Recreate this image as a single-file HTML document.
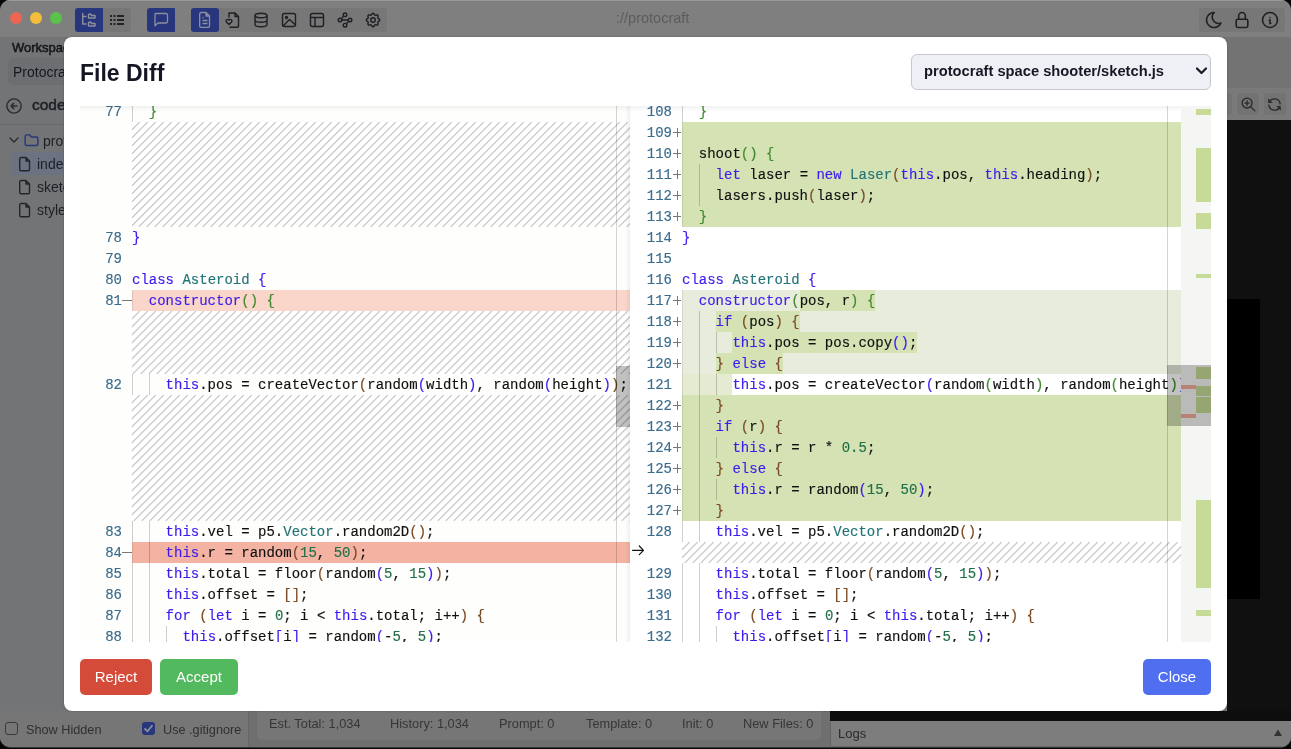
<!DOCTYPE html>
<html><head><meta charset="utf-8">
<style>
*{box-sizing:border-box}
html,body{margin:0;padding:0}
body{width:1291px;height:749px;overflow:hidden;background:#050505;font-family:"Liberation Sans",sans-serif;position:relative}
.abs{position:absolute}
#win{position:absolute;left:0;top:0;width:1291px;height:747px;border-radius:10px;overflow:hidden;background:#737476}
#title{left:0;top:0;width:1291px;height:37px;background:#7f7f7f;border-top:1px solid #9a9a9a}
.tl{position:absolute;width:12px;height:12px;border-radius:50%;top:12px}
.grp{position:absolute;top:8px;height:24px;background:#777777;border-radius:3px}
.btn{position:absolute;top:8px;height:24px;width:28px;border-radius:3px}
.blue{background:#27367d}
.ico{position:absolute;top:8px;width:28px;height:24px}
.ico svg{position:absolute;left:6px;top:4px;width:16px;height:16px}
#modal{left:64px;top:37px;width:1163px;height:674px;background:#fff;border-radius:8px;box-shadow:0 0 2px rgba(0,0,0,.3)}
.pane{position:absolute;top:106px;height:536px;overflow:hidden;will-change:transform}
.lines{position:absolute;left:0;top:-5px;width:100%}
.row{position:absolute;left:52px;right:0;height:21px}
.row.dl{background:#f9d5ca}
.row.ds{background:#f4b3a2}
.row.ad{background:#d5e2b4}
.row.al{background:#e8ecdc}
.seg{position:absolute;top:0;height:21px}
.guide{position:absolute;top:0;width:1px;height:21px;background:rgba(0,0,0,.19)}
.code{position:absolute;left:0;top:0;white-space:pre;font-family:"Liberation Mono",monospace;font-size:14px;line-height:21px;color:#111;padding-top:1px}
.code i{font-style:normal}
.code,.num{-webkit-text-stroke:0.15px currentColor}
.num{position:absolute;left:0;width:42px;text-align:right;height:21px;font-family:"Liberation Mono",monospace;font-size:14px;line-height:21px;color:#3a6c8c;padding-top:1px}
.mk{position:absolute;left:42px;width:10px;height:21px}
.mkp::before{content:"";position:absolute;left:1px;top:10px;width:8px;height:1px;background:#777}
.mkp::after{content:"";position:absolute;left:4.5px;top:6px;width:1px;height:9px;background:#777}
.mkm::before{content:"";position:absolute;left:0;top:10px;width:10px;height:1px;background:#777}
.hatch{position:absolute;left:52px;display:block}
</style></head><body><div id="root" style="position:absolute;left:0;top:0;width:1291px;height:749px;will-change:transform">
<svg width="0" height="0" style="position:absolute"><defs><pattern id="hp" width="8" height="8" patternUnits="userSpaceOnUse"><path d="M-2,2 L2,-2 M0,8 L8,0 M6,10 L10,6" stroke="#cbcbcb" stroke-width="1.1"/></pattern></defs></svg>
<div id="win">
  <div id="title" class="abs"></div>
  <!-- right area -->
  <div class="abs" style="left:1227px;top:37px;width:64px;height:51px;background:#737373"></div>
  <div class="abs" style="left:1227px;top:88px;width:64px;height:32px;background:#7a7a7a"></div>
  <div class="abs" style="left:1210px;top:93px;width:22px;height:22px;border-radius:4px;background:#737373"></div>
  <div class="abs" style="left:1237px;top:93px;width:22px;height:22px;border-radius:4px;background:#737373"></div>
  <div class="abs" style="left:1264px;top:93px;width:22px;height:22px;border-radius:4px;background:#737373"></div>
  <div class="abs" style="left:1227px;top:120px;width:64px;height:591px;background:#101010"></div>
  <div class="abs" style="left:1227px;top:299px;width:33px;height:300px;background:#000"></div>

  <div class="abs" style="left:11px;top:152px;width:237px;height:23px;background:#6c7281"></div>
  <div class="tl" style="left:10px;background:#ec6553"></div>
  <div class="tl" style="left:30px;background:#f3be3b"></div>
  <div class="tl" style="left:50px;background:#5ac24b"></div>
  <div class="grp" style="left:75px;width:56px"></div>
  <div class="btn blue" style="left:75px;border-radius:3px 0 0 3px"></div>
  <div class="btn blue" style="left:147px;border-radius:3px 0 0 3px"></div>
  <div class="grp" style="left:191px;width:196px"></div>
  <div class="btn blue" style="left:191px"></div>
  <div class="abs" style="left:616px;top:10px;font-size:14.5px;color:#5c5c5c">://protocraft</div>
  <div class="grp" style="left:1199px;width:86px"></div>


  <svg class="abs" style="left:79px;top:11px" width="20" height="18" viewBox="0 0 20 18" fill="none" stroke="#8d909c" stroke-width="1.4" stroke-linejoin="round" stroke-linecap="round">
    <path d="M3.7 2.5v10.5h3.3M3.7 5.5h3.3"/>
    <path d="M9.5 3.5v3.5h6.5v-2.5h-3.5l-1-1.5z"/>
    <path d="M9.5 11.5v3.5h6.5v-2.5h-3.5l-1-1.5z"/>
  </svg>
  <svg class="abs" style="left:107px;top:11px" width="20" height="18" viewBox="0 0 20 18" fill="#222327">
    <rect x="3" y="4" width="2" height="2"/><rect x="6.5" y="4" width="2" height="2"/><rect x="10" y="4" width="7" height="2"/>
    <rect x="3" y="8" width="2" height="2"/><rect x="6.5" y="8" width="2" height="2"/><rect x="10" y="8" width="7" height="2"/>
    <rect x="3" y="12" width="2" height="2"/><rect x="6.5" y="12" width="2" height="2"/><rect x="10" y="12" width="7" height="2"/>
  </svg>
  <svg class="abs" style="left:152px;top:11px" width="18" height="18" viewBox="0 0 18 18" fill="none" stroke="#8d909c" stroke-width="1.3" stroke-linejoin="round">
    <path d="M3.5 2.5h10.5a1.5 1.5 0 0 1 1.5 1.5v6.5a1.5 1.5 0 0 1 -1.5 1.5h-8l-3 2.8v-11a1.3 1.3 0 0 1 0.5 -1.3z"/>
  </svg>
  <svg class="abs" style="left:196px;top:11px" width="18" height="18" viewBox="0 0 18 18" fill="none" stroke="#8d909c" stroke-width="1.3" stroke-linejoin="round">
    <path d="M10 1.5v3.5h3.5M5 1.5h5l3.5 3.5v10a1.3 1.3 0 0 1 -1.3 1.3h-7.2a1.3 1.3 0 0 1 -1.3 -1.3v-12.2a1.3 1.3 0 0 1 1.3 -1.3z"/>
    <path d="M6.5 6.5h1M6.5 9.5h5M6.5 12.5h5"/>
  </svg>
  <g></g>
  <svg class="abs" style="left:224px;top:11px" width="18" height="18" viewBox="0 0 18 18" fill="none" stroke="#1f2024" stroke-width="1.4" stroke-linejoin="round" stroke-linecap="round">
    <path d="M5 2h6l3.5 3.5v9.5a1.3 1.3 0 0 1 -1.3 1.3h-7.2M5 2v4M11 2v3.5h3.5"/>
    <path d="M5 13.5l-2.6-2.5a1.5 1.5 0 0 1 2.6-2a1.5 1.5 0 0 1 2.6 2z"/>
  </svg>
  <svg class="abs" style="left:252px;top:11px" width="18" height="18" viewBox="0 0 18 18" fill="none" stroke="#1f2024" stroke-width="1.4">
    <ellipse cx="9" cy="4.5" rx="6" ry="2.3"/>
    <path d="M3 4.5v9a6 2.3 0 0 0 12 0v-9M3 9a6 2.3 0 0 0 12 0"/>
  </svg>
  <svg class="abs" style="left:280px;top:11px" width="18" height="18" viewBox="0 0 18 18" fill="none" stroke="#1f2024" stroke-width="1.4" stroke-linejoin="round">
    <rect x="2.5" y="2.5" width="13" height="13" rx="2"/>
    <circle cx="6.5" cy="6.5" r="1"/>
    <path d="M3 15l6.5-6.5l6 5.5"/>
  </svg>
  <svg class="abs" style="left:308px;top:11px" width="18" height="18" viewBox="0 0 18 18" fill="none" stroke="#1f2024" stroke-width="1.4">
    <rect x="2.5" y="2.5" width="13" height="13" rx="2"/>
    <path d="M2.5 6.5h13M7 6.5v9"/>
  </svg>
  <svg class="abs" style="left:336px;top:11px" width="18" height="18" viewBox="0 0 18 18" fill="none" stroke="#1f2024" stroke-width="1.4">
    <circle cx="4" cy="9" r="1.8"/><circle cx="9" cy="3.8" r="1.8"/><circle cx="14" cy="9" r="1.8"/><circle cx="9" cy="14.2" r="1.8"/>
    <path d="M5.8 9h6.4M5.3 7.7l2.4-2.6M12.7 10.3l-2.4 2.6"/>
  </svg>
  <svg class="abs" style="left:364px;top:11px" width="18" height="18" viewBox="0 0 24 24" fill="none" stroke="#1f2024" stroke-width="1.9" stroke-linejoin="round">
    <path d="M10.325 4.317c.426 -1.756 2.924 -1.756 3.35 0a1.724 1.724 0 0 0 2.573 1.066c1.543 -.94 3.31 .826 2.37 2.37a1.724 1.724 0 0 0 1.065 2.572c1.756 .426 1.756 2.924 0 3.35a1.724 1.724 0 0 0 -1.066 2.573c.94 1.543 -.826 3.31 -2.37 2.37a1.724 1.724 0 0 0 -2.572 1.065c-.426 1.756 -2.924 1.756 -3.35 0a1.724 1.724 0 0 0 -2.573 -1.066c-1.543 .94 -3.31 -.826 -2.37 -2.37a1.724 1.724 0 0 0 -1.065 -2.572c-1.756 -.426 -1.756 -2.924 0 -3.35a1.724 1.724 0 0 0 1.066 -2.573c-.94 -1.543 .826 -3.31 2.37 -2.37c1 .608 2.296 .07 2.572 -1.065z"/>
    <circle cx="12" cy="12" r="3"/>
  </svg>
  <svg class="abs" style="left:1204px;top:10px" width="20" height="20" viewBox="0 0 24 24" fill="none" stroke="#1f2024" stroke-width="1.9" stroke-linejoin="round">
    <path d="M12 3c.132 0 .263 0 .393 0a7.5 7.5 0 0 0 7.92 12.446a9 9 0 1 1 -8.313 -12.454z"/>
  </svg>
  <svg class="abs" style="left:1232px;top:10px" width="20" height="20" viewBox="0 0 24 24" fill="none" stroke="#1f2024" stroke-width="1.9" stroke-linejoin="round">
    <rect x="5" y="11" width="14" height="10" rx="2"/><path d="M8 11v-4a4 4 0 0 1 8 0v4"/>
  </svg>
  <svg class="abs" style="left:1260px;top:10px" width="20" height="20" viewBox="0 0 24 24" fill="none" stroke="#1f2024" stroke-width="1.9" stroke-linecap="round">
    <circle cx="12" cy="12" r="9"/><path d="M12 9h.01M11 12h1v4h1"/>
  </svg>
  <!-- sidebar icons -->
  <svg class="abs" style="left:5px;top:97px" width="18" height="18" viewBox="0 0 24 24" fill="none" stroke="#2a2c32" stroke-width="1.9" stroke-linecap="round" stroke-linejoin="round">
    <circle cx="12" cy="12" r="9.5"/><path d="M8 12h8M8 12l3.5 3.5M8 12l3.5-3.5"/>
  </svg>
  <svg class="abs" style="left:7px;top:133px" width="14" height="14" viewBox="0 0 14 14" fill="none" stroke="#2a2c32" stroke-width="1.4" stroke-linecap="round" stroke-linejoin="round">
    <path d="M3 5l4 4l4-4"/>
  </svg>
  <svg class="abs" style="left:23px;top:132px" width="17" height="17" viewBox="0 0 24 24" fill="none" stroke="#27367d" stroke-width="2" stroke-linejoin="round">
    <path d="M5 4h4l3 3h7a2 2 0 0 1 2 2v8a2 2 0 0 1 -2 2h-14a2 2 0 0 1 -2 -2v-11a2 2 0 0 1 2 -2"/>
  </svg>
  <svg class="abs" style="left:17px;top:155px" width="16" height="18" viewBox="0 0 16 18" fill="none" stroke="#23252b" stroke-width="1.4" stroke-linejoin="round">
    <path d="M9 2.5v3.5h3.5M4 2.5h5l3.5 3.5v8.5a1.3 1.3 0 0 1 -1.3 1.3h-7.2a1.3 1.3 0 0 1 -1.3 -1.3v-10.7a1.3 1.3 0 0 1 1.3 -1.3z"/>
  </svg>
  <svg class="abs" style="left:17px;top:178px" width="16" height="18" viewBox="0 0 16 18" fill="none" stroke="#23252b" stroke-width="1.4" stroke-linejoin="round">
    <path d="M9 2.5v3.5h3.5M4 2.5h5l3.5 3.5v8.5a1.3 1.3 0 0 1 -1.3 1.3h-7.2a1.3 1.3 0 0 1 -1.3 -1.3v-10.7a1.3 1.3 0 0 1 1.3 -1.3z"/>
  </svg>
  <svg class="abs" style="left:17px;top:201px" width="16" height="18" viewBox="0 0 16 18" fill="none" stroke="#23252b" stroke-width="1.4" stroke-linejoin="round">
    <path d="M9 2.5v3.5h3.5M4 2.5h5l3.5 3.5v8.5a1.3 1.3 0 0 1 -1.3 1.3h-7.2a1.3 1.3 0 0 1 -1.3 -1.3v-10.7a1.3 1.3 0 0 1 1.3 -1.3z"/>
  </svg>
  <svg class="abs" style="left:1240px;top:96px" width="17" height="17" viewBox="0 0 24 24" fill="none" stroke="#2a2b30" stroke-width="1.9" stroke-linecap="round">
    <circle cx="10" cy="10" r="7"/><path d="M7 10h6M10 7v6M21 21l-6-6"/>
  </svg>
  <svg class="abs" style="left:1266px;top:96px" width="17" height="17" viewBox="0 0 24 24" fill="none" stroke="#2a2b30" stroke-width="1.9" stroke-linecap="round" stroke-linejoin="round">
    <path d="M20 11a8.1 8.1 0 0 0 -15.5 -2m-.5 -4v4h4M4 13a8.1 8.1 0 0 0 15.5 2m.5 4v-4h-4"/>
  </svg>

  <!-- sidebar -->
  <div class="abs" style="left:12px;top:40px;font-size:13px;color:#15171d;-webkit-text-stroke:0.55px #15171d">Workspace</div>
  <div class="abs" style="left:8px;top:58px;width:240px;height:27px;border-radius:5px;background:#6c6e71"></div>
  <div class="abs" style="left:13px;top:64px;font-size:14px;color:#15171d">Protocraft</div>
  <div class="abs" style="left:32px;top:96px;font-size:15.5px;color:#1d1f25;-webkit-text-stroke:0.45px #1d1f25">code</div>
  <div class="abs" style="left:0;top:124px;width:248px;height:1px;background:#67696b"></div>
  <div class="abs" style="left:43px;top:133px;font-size:14px;color:#1d1f25">protocraft</div>
  <div class="abs" style="left:37px;top:156px;font-size:14px;color:#1d1f25">index.html</div>
  <div class="abs" style="left:37px;top:179px;font-size:14px;color:#1d1f25">sketch.js</div>
  <div class="abs" style="left:37px;top:202px;font-size:14px;color:#1d1f25">style.css</div>

  <!-- bottom bar -->
  <div class="abs" style="left:0;top:711px;width:248px;height:36px;background:#767676"></div>
  <div class="abs" style="left:248px;top:711px;width:582px;height:36px;background:#6f6f6f;border-left:1px solid #686868"></div>
  <div class="abs" style="left:257px;top:711px;width:564px;height:29px;border-radius:0 0 5px 5px;background:#767676"></div>
  <div class="abs" style="left:830px;top:711px;width:461px;height:10px;background:#0d0d0d"></div>
  <div class="abs" style="left:830px;top:721px;width:461px;height:26px;background:#7d7d7d;border-left:1px solid #666;border-bottom:1px solid #6a6a6a"></div>
  <div class="abs" style="left:5px;top:722px;width:13px;height:13px;border:1px solid #3a3a3a;border-radius:3px"></div>
  <div class="abs" style="left:26px;top:722px;font-size:12.7px;color:#303030;margin-top:1px">Show Hidden</div>
  <div class="abs" style="left:142px;top:722px;width:13px;height:13px;border-radius:3px;background:#27367d"></div>
  <svg class="abs" style="left:142px;top:722px" width="13" height="13" viewBox="0 0 13 13" fill="none" stroke="#8d909c" stroke-width="1.8" stroke-linecap="round" stroke-linejoin="round"><path d="M3 6.8l2.5 2.5l4.5-5.5"/></svg>
  <div class="abs" style="left:163px;top:722px;font-size:12.7px;color:#303030;margin-top:1px">Use .gitignore</div>
  <div class="abs" style="left:269px;top:716px;font-size:12.8px;color:#363636">Est. Total: 1,034</div>
  <div class="abs" style="left:390px;top:716px;font-size:12.8px;color:#363636">History: 1,034</div>
  <div class="abs" style="left:499px;top:716px;font-size:12.8px;color:#363636">Prompt: 0</div>
  <div class="abs" style="left:586px;top:716px;font-size:12.8px;color:#363636">Template: 0</div>
  <div class="abs" style="left:682px;top:716px;font-size:12.8px;color:#363636">Init: 0</div>
  <div class="abs" style="left:743px;top:716px;font-size:12.8px;color:#363636">New Files: 0</div>
  <div class="abs" style="left:838px;top:726px;font-size:13px;color:#2a2a2a">Logs</div>
  <svg class="abs" style="left:1273px;top:728px" width="10" height="9" viewBox="0 0 10 9"><path d="M5 1.5L9 8H1z" fill="#333"/></svg>
</div>

<div class="abs" style="left:0;top:0;width:1291px;height:748px;border-radius:10px;border-bottom:1px solid rgba(255,255,255,.2);pointer-events:none"></div>
<!-- modal -->
<div id="modal" class="abs"></div>
<div class="abs" style="left:80px;top:60px;font-size:23px;font-weight:bold;color:#141624">File Diff</div>
<div class="abs" style="left:911px;top:54px;width:300px;height:36px;border:1px solid #c6c8d0;border-radius:6px;background:#eff0f5"></div>
<div class="abs" style="left:924px;top:63px;font-size:14.7px;font-weight:bold;color:#161824">protocraft space shooter/sketch.js</div>
<svg class="abs" style="left:1195px;top:65px" width="13" height="12" viewBox="0 0 13 12" fill="none" stroke="#161824" stroke-width="2.2" stroke-linecap="round" stroke-linejoin="round"><path d="M2 3.5l4.5 4.5l4.5-4.5"/></svg>

<div class="pane" style="left:80px;width:550px;background:#fefefc">
  <div class="lines">
<div class="row" style="top:0px">
<div class="guide" style="left:0px"></div>
<div class="code">  <i style="color:#3f8a2c">}</i></div>
</div>
<div class="num" style="top:0px">77</div>
<svg class="hatch" style="top:21px;height:105px" width="498" height="105"><rect width="100%" height="100%" fill="#fff"/><path d="M-0.25,0L-105.25,105M7.75,0L-97.25,105M15.75,0L-89.25,105M23.75,0L-81.25,105M31.75,0L-73.25,105M39.75,0L-65.25,105M47.75,0L-57.25,105M55.75,0L-49.25,105M63.75,0L-41.25,105M71.75,0L-33.25,105M79.75,0L-25.25,105M87.75,0L-17.25,105M95.75,0L-9.25,105M103.75,0L-1.25,105M111.75,0L6.75,105M119.75,0L14.75,105M127.75,0L22.75,105M135.75,0L30.75,105M143.75,0L38.75,105M151.75,0L46.75,105M159.75,0L54.75,105M167.75,0L62.75,105M175.75,0L70.75,105M183.75,0L78.75,105M191.75,0L86.75,105M199.75,0L94.75,105M207.75,0L102.75,105M215.75,0L110.75,105M223.75,0L118.75,105M231.75,0L126.75,105M239.75,0L134.75,105M247.75,0L142.75,105M255.75,0L150.75,105M263.75,0L158.75,105M271.75,0L166.75,105M279.75,0L174.75,105M287.75,0L182.75,105M295.75,0L190.75,105M303.75,0L198.75,105M311.75,0L206.75,105M319.75,0L214.75,105M327.75,0L222.75,105M335.75,0L230.75,105M343.75,0L238.75,105M351.75,0L246.75,105M359.75,0L254.75,105M367.75,0L262.75,105M375.75,0L270.75,105M383.75,0L278.75,105M391.75,0L286.75,105M399.75,0L294.75,105M407.75,0L302.75,105M415.75,0L310.75,105M423.75,0L318.75,105M431.75,0L326.75,105M439.75,0L334.75,105M447.75,0L342.75,105M455.75,0L350.75,105M463.75,0L358.75,105M471.75,0L366.75,105M479.75,0L374.75,105M487.75,0L382.75,105M495.75,0L390.75,105M503.75,0L398.75,105M511.75,0L406.75,105M519.75,0L414.75,105M527.75,0L422.75,105M535.75,0L430.75,105M543.75,0L438.75,105M551.75,0L446.75,105M559.75,0L454.75,105M567.75,0L462.75,105M575.75,0L470.75,105M583.75,0L478.75,105M591.75,0L486.75,105M599.75,0L494.75,105M607.75,0L502.75,105M615.75,0L510.75,105" stroke="#cbcbcb" stroke-width="1.25" fill="none"/></svg>
<div class="row" style="top:126px">
<div class="code"><i style="color:#3a1cf0">}</i></div>
</div>
<div class="num" style="top:126px">78</div>
<div class="row" style="top:147px">
<div class="code"></div>
</div>
<div class="num" style="top:147px">79</div>
<div class="row" style="top:168px">
<div class="code"><i style="color:#3a1cf0">class</i> <i style="color:#227377">Asteroid</i> <i style="color:#3a1cf0">{</i></div>
</div>
<div class="num" style="top:168px">80</div>
<div class="row dl" style="top:189px">
<div class="guide" style="left:0;background:rgba(0,0,0,.09)"></div>
<div class="code">  <i style="color:#3a1cf0">constructor</i><i style="color:#3f8a2c">()</i> <i style="color:#3f8a2c">{</i></div>
</div>
<div class="num" style="top:189px">81</div>
<div class="mk mkm" style="top:189px"></div>
<svg class="hatch" style="top:210px;height:63px" width="498" height="63"><rect width="100%" height="100%" fill="#fff"/><path d="M-0.25,0L-63.25,63M7.75,0L-55.25,63M15.75,0L-47.25,63M23.75,0L-39.25,63M31.75,0L-31.25,63M39.75,0L-23.25,63M47.75,0L-15.25,63M55.75,0L-7.25,63M63.75,0L0.75,63M71.75,0L8.75,63M79.75,0L16.75,63M87.75,0L24.75,63M95.75,0L32.75,63M103.75,0L40.75,63M111.75,0L48.75,63M119.75,0L56.75,63M127.75,0L64.75,63M135.75,0L72.75,63M143.75,0L80.75,63M151.75,0L88.75,63M159.75,0L96.75,63M167.75,0L104.75,63M175.75,0L112.75,63M183.75,0L120.75,63M191.75,0L128.75,63M199.75,0L136.75,63M207.75,0L144.75,63M215.75,0L152.75,63M223.75,0L160.75,63M231.75,0L168.75,63M239.75,0L176.75,63M247.75,0L184.75,63M255.75,0L192.75,63M263.75,0L200.75,63M271.75,0L208.75,63M279.75,0L216.75,63M287.75,0L224.75,63M295.75,0L232.75,63M303.75,0L240.75,63M311.75,0L248.75,63M319.75,0L256.75,63M327.75,0L264.75,63M335.75,0L272.75,63M343.75,0L280.75,63M351.75,0L288.75,63M359.75,0L296.75,63M367.75,0L304.75,63M375.75,0L312.75,63M383.75,0L320.75,63M391.75,0L328.75,63M399.75,0L336.75,63M407.75,0L344.75,63M415.75,0L352.75,63M423.75,0L360.75,63M431.75,0L368.75,63M439.75,0L376.75,63M447.75,0L384.75,63M455.75,0L392.75,63M463.75,0L400.75,63M471.75,0L408.75,63M479.75,0L416.75,63M487.75,0L424.75,63M495.75,0L432.75,63M503.75,0L440.75,63M511.75,0L448.75,63M519.75,0L456.75,63M527.75,0L464.75,63M535.75,0L472.75,63M543.75,0L480.75,63M551.75,0L488.75,63M559.75,0L496.75,63M567.75,0L504.75,63M575.75,0L512.75,63" stroke="#cbcbcb" stroke-width="1.25" fill="none"/></svg>
<div class="row" style="top:273px">
<div class="guide" style="left:0px"></div>
<div class="guide" style="left:17px"></div>
<div class="code">    <i style="color:#3a1cf0">this</i>.pos = createVector<i style="color:#7a4a24">(</i>random<i style="color:#3a1cf0">(</i>width<i style="color:#3a1cf0">)</i>, random<i style="color:#3a1cf0">(</i>height<i style="color:#3a1cf0">)</i><i style="color:#7a4a24">)</i>;</div>
</div>
<div class="num" style="top:273px">82</div>
<svg class="hatch" style="top:294px;height:126px" width="498" height="126"><rect width="100%" height="100%" fill="#fff"/><path d="M-0.25,0L-126.25,126M7.75,0L-118.25,126M15.75,0L-110.25,126M23.75,0L-102.25,126M31.75,0L-94.25,126M39.75,0L-86.25,126M47.75,0L-78.25,126M55.75,0L-70.25,126M63.75,0L-62.25,126M71.75,0L-54.25,126M79.75,0L-46.25,126M87.75,0L-38.25,126M95.75,0L-30.25,126M103.75,0L-22.25,126M111.75,0L-14.25,126M119.75,0L-6.25,126M127.75,0L1.75,126M135.75,0L9.75,126M143.75,0L17.75,126M151.75,0L25.75,126M159.75,0L33.75,126M167.75,0L41.75,126M175.75,0L49.75,126M183.75,0L57.75,126M191.75,0L65.75,126M199.75,0L73.75,126M207.75,0L81.75,126M215.75,0L89.75,126M223.75,0L97.75,126M231.75,0L105.75,126M239.75,0L113.75,126M247.75,0L121.75,126M255.75,0L129.75,126M263.75,0L137.75,126M271.75,0L145.75,126M279.75,0L153.75,126M287.75,0L161.75,126M295.75,0L169.75,126M303.75,0L177.75,126M311.75,0L185.75,126M319.75,0L193.75,126M327.75,0L201.75,126M335.75,0L209.75,126M343.75,0L217.75,126M351.75,0L225.75,126M359.75,0L233.75,126M367.75,0L241.75,126M375.75,0L249.75,126M383.75,0L257.75,126M391.75,0L265.75,126M399.75,0L273.75,126M407.75,0L281.75,126M415.75,0L289.75,126M423.75,0L297.75,126M431.75,0L305.75,126M439.75,0L313.75,126M447.75,0L321.75,126M455.75,0L329.75,126M463.75,0L337.75,126M471.75,0L345.75,126M479.75,0L353.75,126M487.75,0L361.75,126M495.75,0L369.75,126M503.75,0L377.75,126M511.75,0L385.75,126M519.75,0L393.75,126M527.75,0L401.75,126M535.75,0L409.75,126M543.75,0L417.75,126M551.75,0L425.75,126M559.75,0L433.75,126M567.75,0L441.75,126M575.75,0L449.75,126M583.75,0L457.75,126M591.75,0L465.75,126M599.75,0L473.75,126M607.75,0L481.75,126M615.75,0L489.75,126M623.75,0L497.75,126M631.75,0L505.75,126" stroke="#cbcbcb" stroke-width="1.25" fill="none"/></svg>
<div class="row" style="top:420px">
<div class="guide" style="left:0px"></div>
<div class="guide" style="left:17px"></div>
<div class="code">    <i style="color:#3a1cf0">this</i>.vel = p5.<i style="color:#227377">Vector</i>.random2D<i style="color:#7a4a24">()</i>;</div>
</div>
<div class="num" style="top:420px">83</div>
<div class="row ds" style="top:441px">
<div class="guide" style="left:0;background:rgba(0,0,0,.09)"></div>
<div class="guide" style="left:17px"></div>
<div class="code">    <i style="color:#3a1cf0">this</i>.r = random<i style="color:#7a4a24">(</i><i style="color:#217048">15</i>, <i style="color:#217048">50</i><i style="color:#7a4a24">)</i>;</div>
</div>
<div class="num" style="top:441px">84</div>
<div class="mk mkm" style="top:441px"></div>
<div class="row" style="top:462px">
<div class="guide" style="left:0px"></div>
<div class="guide" style="left:17px"></div>
<div class="code">    <i style="color:#3a1cf0">this</i>.total = floor<i style="color:#7a4a24">(</i>random<i style="color:#3a1cf0">(</i><i style="color:#217048">5</i>, <i style="color:#217048">15</i><i style="color:#3a1cf0">)</i><i style="color:#7a4a24">)</i>;</div>
</div>
<div class="num" style="top:462px">85</div>
<div class="row" style="top:483px">
<div class="guide" style="left:0px"></div>
<div class="guide" style="left:17px"></div>
<div class="code">    <i style="color:#3a1cf0">this</i>.offset = <i style="color:#7a4a24">[]</i>;</div>
</div>
<div class="num" style="top:483px">86</div>
<div class="row" style="top:504px">
<div class="guide" style="left:0px"></div>
<div class="guide" style="left:17px"></div>
<div class="code">    <i style="color:#3a1cf0">for</i> <i style="color:#7a4a24">(</i><i style="color:#3a1cf0">let</i> i = <i style="color:#217048">0</i>; i &lt; <i style="color:#3a1cf0">this</i>.total; i++<i style="color:#7a4a24">)</i> <i style="color:#7a4a24">{</i></div>
</div>
<div class="num" style="top:504px">87</div>
<div class="row" style="top:525px">
<div class="guide" style="left:0px"></div>
<div class="guide" style="left:17px"></div>
<div class="guide" style="left:34px"></div>
<div class="code">      <i style="color:#3a1cf0">this</i>.offset<i style="color:#3a1cf0">[</i>i<i style="color:#3a1cf0">]</i> = random<i style="color:#3a1cf0">(</i>-<i style="color:#217048">5</i>, <i style="color:#217048">5</i><i style="color:#3a1cf0">)</i>;</div>
</div>
<div class="num" style="top:525px">88</div>
  </div>
  <div class="abs" style="left:536px;top:0;width:1px;height:536px;background:rgba(0,0,0,.17)"></div>
  <div class="abs" style="left:536px;top:260px;width:14px;height:61px;background:rgba(0,0,0,.24)"></div>
  <div class="abs" style="left:545px;top:0;width:5px;height:536px;background:linear-gradient(to right,rgba(0,0,0,0),rgba(0,0,0,.06))"></div>
  <div class="abs" style="left:0;top:0;width:550px;height:6px;background:linear-gradient(to bottom,rgba(0,0,0,.05),rgba(0,0,0,0))"></div>
</div>

<div class="pane" style="left:630px;width:551px;background:#fff">
  <div class="lines">
<div class="row" style="top:0px">
<div class="guide" style="left:0px"></div>
<div class="code">  <i style="color:#3f8a2c">}</i></div>
</div>
<div class="num" style="top:0px">108</div>
<div class="row ad" style="top:21px">
<div class="guide" style="left:0;background:rgba(0,0,0,.09)"></div>
<div class="code"></div>
</div>
<div class="num" style="top:21px">109</div>
<div class="mk mkp" style="top:21px"></div>
<div class="row ad" style="top:42px">
<div class="guide" style="left:0;background:rgba(0,0,0,.09)"></div>
<div class="code">  shoot<i style="color:#3f8a2c">()</i> <i style="color:#3f8a2c">{</i></div>
</div>
<div class="num" style="top:42px">110</div>
<div class="mk mkp" style="top:42px"></div>
<div class="row ad" style="top:63px">
<div class="guide" style="left:0;background:rgba(0,0,0,.09)"></div>
<div class="guide" style="left:17px"></div>
<div class="code">    <i style="color:#3a1cf0">let</i> laser = <i style="color:#3a1cf0">new</i> <i style="color:#227377">Laser</i><i style="color:#7a4a24">(</i><i style="color:#3a1cf0">this</i>.pos, <i style="color:#3a1cf0">this</i>.heading<i style="color:#7a4a24">)</i>;</div>
</div>
<div class="num" style="top:63px">111</div>
<div class="mk mkp" style="top:63px"></div>
<div class="row ad" style="top:84px">
<div class="guide" style="left:0;background:rgba(0,0,0,.09)"></div>
<div class="guide" style="left:17px"></div>
<div class="code">    lasers.push<i style="color:#7a4a24">(</i>laser<i style="color:#7a4a24">)</i>;</div>
</div>
<div class="num" style="top:84px">112</div>
<div class="mk mkp" style="top:84px"></div>
<div class="row ad" style="top:105px">
<div class="guide" style="left:0;background:rgba(0,0,0,.09)"></div>
<div class="code">  <i style="color:#3f8a2c">}</i></div>
</div>
<div class="num" style="top:105px">113</div>
<div class="mk mkp" style="top:105px"></div>
<div class="row" style="top:126px">
<div class="code"><i style="color:#3a1cf0">}</i></div>
</div>
<div class="num" style="top:126px">114</div>
<div class="row" style="top:147px">
<div class="code"></div>
</div>
<div class="num" style="top:147px">115</div>
<div class="row" style="top:168px">
<div class="code"><i style="color:#3a1cf0">class</i> <i style="color:#227377">Asteroid</i> <i style="color:#3a1cf0">{</i></div>
</div>
<div class="num" style="top:168px">116</div>
<div class="row al" style="top:189px">
<div class="seg" style="left:117.60000000000001px;width:75.60000000000001px;background:#d5e2b4"></div>
<div class="guide" style="left:0;background:rgba(0,0,0,.09)"></div>
<div class="code">  <i style="color:#3a1cf0">constructor</i><i style="color:#3f8a2c">(</i>pos, r<i style="color:#3f8a2c">)</i> <i style="color:#3f8a2c">{</i></div>
</div>
<div class="num" style="top:189px">117</div>
<div class="mk mkp" style="top:189px"></div>
<div class="row al" style="top:210px">
<div class="seg" style="left:33.6px;width:84.0px;background:#d5e2b4"></div>
<div class="guide" style="left:0;background:rgba(0,0,0,.09)"></div>
<div class="guide" style="left:17px"></div>
<div class="code">    <i style="color:#3a1cf0">if</i> <i style="color:#7a4a24">(</i>pos<i style="color:#7a4a24">)</i> <i style="color:#7a4a24">{</i></div>
</div>
<div class="num" style="top:210px">118</div>
<div class="mk mkp" style="top:210px"></div>
<div class="row al" style="top:231px">
<div class="seg" style="left:50.400000000000006px;width:184.8px;background:#d5e2b4"></div>
<div class="guide" style="left:0;background:rgba(0,0,0,.09)"></div>
<div class="guide" style="left:17px"></div>
<div class="guide" style="left:34px"></div>
<div class="code">      <i style="color:#3a1cf0">this</i>.pos = pos.copy<i style="color:#3a1cf0">()</i>;</div>
</div>
<div class="num" style="top:231px">119</div>
<div class="mk mkp" style="top:231px"></div>
<div class="row al" style="top:252px">
<div class="seg" style="left:33.6px;width:67.2px;background:#d5e2b4"></div>
<div class="guide" style="left:0;background:rgba(0,0,0,.09)"></div>
<div class="guide" style="left:17px"></div>
<div class="code">    <i style="color:#7a4a24">}</i> <i style="color:#3a1cf0">else</i> <i style="color:#7a4a24">{</i></div>
</div>
<div class="num" style="top:252px">120</div>
<div class="mk mkp" style="top:252px"></div>
<div class="row" style="top:273px">
<div class="seg" style="left:0;width:50.400000000000006px;background:#e4ebd0"></div>
<div class="guide" style="left:0;background:rgba(0,0,0,.09)"></div>
<div class="guide" style="left:17px"></div>
<div class="guide" style="left:34px"></div>
<div class="code">      <i style="color:#3a1cf0">this</i>.pos = createVector<i style="color:#3a1cf0">(</i>random<i style="color:#3f8a2c">(</i>width<i style="color:#3f8a2c">)</i>, random<i style="color:#3f8a2c">(</i>height<i style="color:#3f8a2c">)</i><i style="color:#3a1cf0">)</i>;</div>
</div>
<div class="num" style="top:273px">121</div>
<div class="row ad" style="top:294px">
<div class="guide" style="left:0;background:rgba(0,0,0,.09)"></div>
<div class="guide" style="left:17px"></div>
<div class="code">    <i style="color:#7a4a24">}</i></div>
</div>
<div class="num" style="top:294px">122</div>
<div class="mk mkp" style="top:294px"></div>
<div class="row ad" style="top:315px">
<div class="guide" style="left:0;background:rgba(0,0,0,.09)"></div>
<div class="guide" style="left:17px"></div>
<div class="code">    <i style="color:#3a1cf0">if</i> <i style="color:#7a4a24">(</i>r<i style="color:#7a4a24">)</i> <i style="color:#7a4a24">{</i></div>
</div>
<div class="num" style="top:315px">123</div>
<div class="mk mkp" style="top:315px"></div>
<div class="row ad" style="top:336px">
<div class="guide" style="left:0;background:rgba(0,0,0,.09)"></div>
<div class="guide" style="left:17px"></div>
<div class="guide" style="left:34px"></div>
<div class="code">      <i style="color:#3a1cf0">this</i>.r = r * <i style="color:#217048">0.5</i>;</div>
</div>
<div class="num" style="top:336px">124</div>
<div class="mk mkp" style="top:336px"></div>
<div class="row ad" style="top:357px">
<div class="guide" style="left:0;background:rgba(0,0,0,.09)"></div>
<div class="guide" style="left:17px"></div>
<div class="code">    <i style="color:#7a4a24">}</i> <i style="color:#3a1cf0">else</i> <i style="color:#7a4a24">{</i></div>
</div>
<div class="num" style="top:357px">125</div>
<div class="mk mkp" style="top:357px"></div>
<div class="row ad" style="top:378px">
<div class="guide" style="left:0;background:rgba(0,0,0,.09)"></div>
<div class="guide" style="left:17px"></div>
<div class="guide" style="left:34px"></div>
<div class="code">      <i style="color:#3a1cf0">this</i>.r = random<i style="color:#3a1cf0">(</i><i style="color:#217048">15</i>, <i style="color:#217048">50</i><i style="color:#3a1cf0">)</i>;</div>
</div>
<div class="num" style="top:378px">126</div>
<div class="mk mkp" style="top:378px"></div>
<div class="row ad" style="top:399px">
<div class="guide" style="left:0;background:rgba(0,0,0,.09)"></div>
<div class="guide" style="left:17px"></div>
<div class="code">    <i style="color:#7a4a24">}</i></div>
</div>
<div class="num" style="top:399px">127</div>
<div class="mk mkp" style="top:399px"></div>
<div class="row" style="top:420px">
<div class="guide" style="left:0px"></div>
<div class="guide" style="left:17px"></div>
<div class="code">    <i style="color:#3a1cf0">this</i>.vel = p5.<i style="color:#227377">Vector</i>.random2D<i style="color:#7a4a24">()</i>;</div>
</div>
<div class="num" style="top:420px">128</div>
<svg class="hatch" style="top:441px;height:21px" width="499" height="21"><rect width="100%" height="100%" fill="#fff"/><path d="M-0.25,0L-21.25,21M7.75,0L-13.25,21M15.75,0L-5.25,21M23.75,0L2.75,21M31.75,0L10.75,21M39.75,0L18.75,21M47.75,0L26.75,21M55.75,0L34.75,21M63.75,0L42.75,21M71.75,0L50.75,21M79.75,0L58.75,21M87.75,0L66.75,21M95.75,0L74.75,21M103.75,0L82.75,21M111.75,0L90.75,21M119.75,0L98.75,21M127.75,0L106.75,21M135.75,0L114.75,21M143.75,0L122.75,21M151.75,0L130.75,21M159.75,0L138.75,21M167.75,0L146.75,21M175.75,0L154.75,21M183.75,0L162.75,21M191.75,0L170.75,21M199.75,0L178.75,21M207.75,0L186.75,21M215.75,0L194.75,21M223.75,0L202.75,21M231.75,0L210.75,21M239.75,0L218.75,21M247.75,0L226.75,21M255.75,0L234.75,21M263.75,0L242.75,21M271.75,0L250.75,21M279.75,0L258.75,21M287.75,0L266.75,21M295.75,0L274.75,21M303.75,0L282.75,21M311.75,0L290.75,21M319.75,0L298.75,21M327.75,0L306.75,21M335.75,0L314.75,21M343.75,0L322.75,21M351.75,0L330.75,21M359.75,0L338.75,21M367.75,0L346.75,21M375.75,0L354.75,21M383.75,0L362.75,21M391.75,0L370.75,21M399.75,0L378.75,21M407.75,0L386.75,21M415.75,0L394.75,21M423.75,0L402.75,21M431.75,0L410.75,21M439.75,0L418.75,21M447.75,0L426.75,21M455.75,0L434.75,21M463.75,0L442.75,21M471.75,0L450.75,21M479.75,0L458.75,21M487.75,0L466.75,21M495.75,0L474.75,21M503.75,0L482.75,21M511.75,0L490.75,21M519.75,0L498.75,21M527.75,0L506.75,21" stroke="#cbcbcb" stroke-width="1.25" fill="none"/></svg>
<div class="row" style="top:462px">
<div class="guide" style="left:0px"></div>
<div class="guide" style="left:17px"></div>
<div class="code">    <i style="color:#3a1cf0">this</i>.total = floor<i style="color:#7a4a24">(</i>random<i style="color:#3a1cf0">(</i><i style="color:#217048">5</i>, <i style="color:#217048">15</i><i style="color:#3a1cf0">)</i><i style="color:#7a4a24">)</i>;</div>
</div>
<div class="num" style="top:462px">129</div>
<div class="row" style="top:483px">
<div class="guide" style="left:0px"></div>
<div class="guide" style="left:17px"></div>
<div class="code">    <i style="color:#3a1cf0">this</i>.offset = <i style="color:#7a4a24">[]</i>;</div>
</div>
<div class="num" style="top:483px">130</div>
<div class="row" style="top:504px">
<div class="guide" style="left:0px"></div>
<div class="guide" style="left:17px"></div>
<div class="code">    <i style="color:#3a1cf0">for</i> <i style="color:#7a4a24">(</i><i style="color:#3a1cf0">let</i> i = <i style="color:#217048">0</i>; i &lt; <i style="color:#3a1cf0">this</i>.total; i++<i style="color:#7a4a24">)</i> <i style="color:#7a4a24">{</i></div>
</div>
<div class="num" style="top:504px">131</div>
<div class="row" style="top:525px">
<div class="guide" style="left:0px"></div>
<div class="guide" style="left:17px"></div>
<div class="guide" style="left:34px"></div>
<div class="code">      <i style="color:#3a1cf0">this</i>.offset<i style="color:#3a1cf0">[</i>i<i style="color:#3a1cf0">]</i> = random<i style="color:#3a1cf0">(</i>-<i style="color:#217048">5</i>, <i style="color:#217048">5</i><i style="color:#3a1cf0">)</i>;</div>
</div>
<div class="num" style="top:525px">132</div>
  </div>
  <div class="abs" style="left:537px;top:0;width:1px;height:536px;background:rgba(0,0,0,.17)"></div>
  <div class="abs" style="left:0;top:0;width:551px;height:6px;background:linear-gradient(to bottom,rgba(0,0,0,.05),rgba(0,0,0,0))"></div>
</div>

<svg class="abs" style="left:631px;top:543px" width="14" height="14" viewBox="0 0 14 14" fill="none" stroke="#111" stroke-width="1.2" stroke-linecap="round" stroke-linejoin="round"><path d="M1.5 7.3h11M8.3 3l4.2 4.3l-4.2 4.3"/></svg>
<!-- minimap -->
<div class="abs" style="left:1181px;top:106px;width:30px;height:536px;background:#f5f5f4">
  <div class="abs" style="left:15px;top:3px;width:15px;height:6px;background:#c6db98"></div>
  <div class="abs" style="left:15px;top:42px;width:15px;height:54px;background:#c6db98"></div>
  <div class="abs" style="left:15px;top:107px;width:15px;height:16px;background:#c6db98"></div>
  <div class="abs" style="left:15px;top:168px;width:15px;height:4px;background:#c6db98"></div>
  <div class="abs" style="left:15px;top:261px;width:15px;height:12px;background:#c6db98"></div>
  <div class="abs" style="left:15px;top:280px;width:15px;height:10px;background:#c6db98"></div>
  <div class="abs" style="left:15px;top:291px;width:15px;height:16px;background:#c6db98"></div>
  <div class="abs" style="left:15px;top:394px;width:15px;height:88px;background:#c6db98"></div>
  <div class="abs" style="left:15px;top:504px;width:15px;height:6px;background:#c6db98"></div>
  <div class="abs" style="left:0;top:279px;width:15px;height:4px;background:#f2ad9c"></div>
  <div class="abs" style="left:0;top:308px;width:15px;height:4px;background:#f2ad9c"></div>
</div>
<div class="abs" style="left:1167px;top:365px;width:44px;height:61px;background:rgba(0,0,0,.24)"></div>

<!-- footer buttons -->
<div class="abs" style="left:80px;top:659px;width:72px;height:36px;border-radius:5px;background:#d44b3a;color:#fff;font-size:15px;text-align:center;line-height:36px">Reject</div>
<div class="abs" style="left:160px;top:659px;width:78px;height:36px;border-radius:5px;background:#52b95f;color:#fff;font-size:15px;text-align:center;line-height:36px">Accept</div>
<div class="abs" style="left:1143px;top:659px;width:68px;height:36px;border-radius:5px;background:#4f6ff0;color:#fff;font-size:15px;text-align:center;line-height:36px">Close</div>
</div></body></html>
